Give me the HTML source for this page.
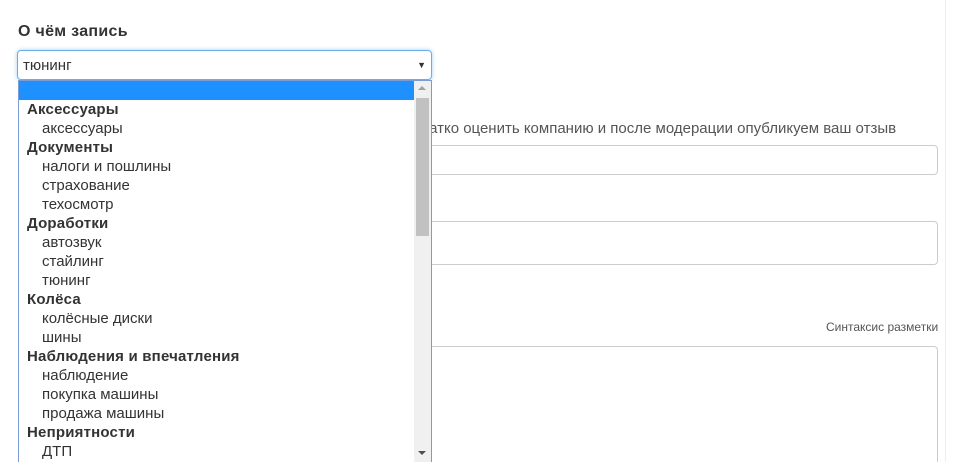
<!DOCTYPE html>
<html style="height:462px;overflow:hidden"><head><meta charset="utf-8"><style>
body{margin:0;width:959px;height:462px;background:#fff;position:relative;overflow:hidden;font-family:"Liberation Sans",Arial,sans-serif;color:#333}
.a{position:absolute}
.lab{left:18px;top:23px;font-size:16px;font-weight:bold;letter-spacing:0.3px}
.sel{left:17px;top:50px;height:28px;border:1px solid #66afe9;border-radius:4px;box-shadow:0 0 4px rgba(102,175,233,.6);font-size:15px;line-height:29px;padding-left:5px;width:408px}
.sel .ar{position:absolute;right:5px;top:0;font-size:9px}
.dd{left:18px;top:80px;width:412px;height:382px;border:1px solid #7a9cd3;border-bottom:none;background:#fff;overflow:hidden;font-size:15px}
.dd .r{height:19px;line-height:20px;white-space:nowrap}
.g{font-weight:bold;padding-left:8px;letter-spacing:0.2px}
.o{padding-left:23px}
.hl{background:#1e90ff}
.sb{position:absolute;right:0;top:0;width:17px;height:382px;background:#f0f0f0}
.th{position:absolute;left:2px;top:17px;width:13px;height:138px;background:#c1c1c1}
.inp{border:1px solid #ccc;border-radius:4px;background:#fff}
.t{font-size:15px;color:#555}
</style></head><body>
<div class="a" style="left:945px;top:0;width:1px;height:462px;background:#eee"></div>
<div class="a lab">О чём запись</div>
<div class="a t" style="left:412px;top:120px;white-space:nowrap">Кратко оценить компанию и после модерации опубликуем ваш отзыв</div>
<div class="a inp" style="left:380px;top:145px;width:556px;height:28px"></div>
<div class="a inp" style="left:380px;top:221px;width:556px;height:42px"></div>
<div class="a" style="left:826px;top:320px;font-size:12px;color:#555">Синтаксис разметки</div>
<div class="a inp" style="left:380px;top:346px;width:556px;height:130px"></div>
<div class="a sel">тюнинг<span class="ar">▼</span></div>
<div class="a dd">
<div class="r hl"></div>
<div class="r g">Аксессуары</div>
<div class="r o">аксессуары</div>
<div class="r g">Документы</div>
<div class="r o">налоги и пошлины</div>
<div class="r o">страхование</div>
<div class="r o">техосмотр</div>
<div class="r g">Доработки</div>
<div class="r o">автозвук</div>
<div class="r o">стайлинг</div>
<div class="r o">тюнинг</div>
<div class="r g">Колёса</div>
<div class="r o">колёсные диски</div>
<div class="r o">шины</div>
<div class="r g">Наблюдения и впечатления</div>
<div class="r o">наблюдение</div>
<div class="r o">покупка машины</div>
<div class="r o">продажа машины</div>
<div class="r g">Неприятности</div>
<div class="r o">ДТП</div>
<div class="sb"><div class="th"></div>
<div style="position:absolute;left:4px;top:5px;width:0;height:0;border-left:4px solid transparent;border-right:4px solid transparent;border-bottom:4px solid #a0a0a0"></div>
<div style="position:absolute;left:4px;top:370px;width:0;height:0;border-left:4px solid transparent;border-right:4px solid transparent;border-top:4px solid #505050"></div>
</div>
</div>
</body></html>
